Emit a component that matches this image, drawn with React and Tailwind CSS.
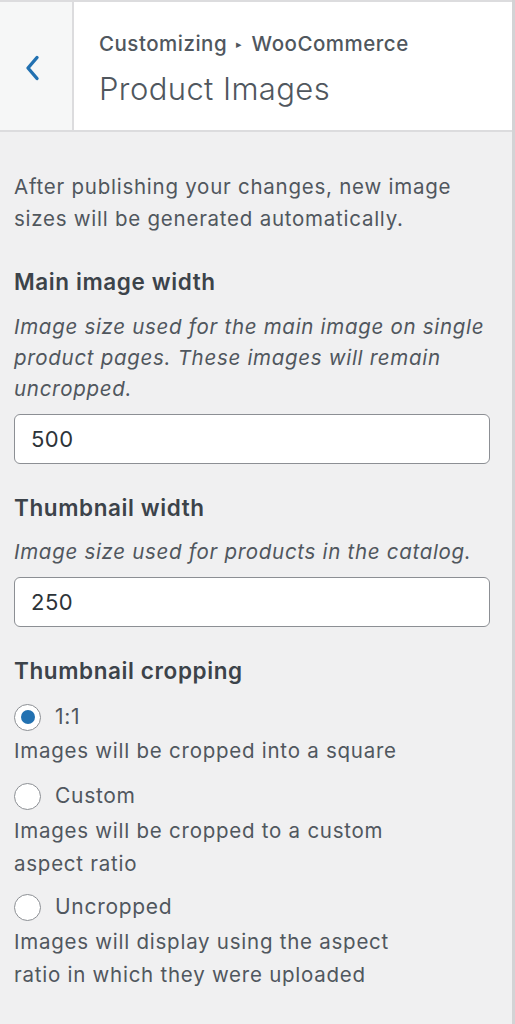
import React from "react";

function Radio({ checked, label }) {
  return (
    <div className="flex items-center h-[32px]">
      <span className="w-[27px] h-[27px] rounded-full border-[1.5px] border-[#8c8f94] bg-white flex items-center justify-center shrink-0">
        {checked && <span className="w-[14px] h-[14px] rounded-full bg-[#2271b1]" />}
      </span>
      <span className="ml-[14px] text-[21px] tracking-[0.7px] leading-[32px] text-[#50575e]">{label}</span>
    </div>
  );
}

export default function App() {
  const font = { fontFamily: "Inter, 'Noto Sans', sans-serif" };
  const body = "text-[20.5px] tracking-[0.75px] text-[#50575e]";
  const ital = "text-[20.5px] tracking-[0.7px] leading-[31px] italic text-[#50575e]";
  const head = "text-[22.5px] tracking-[0.6px] leading-[32px] font-semibold text-[#3c434a]";
  const input = "mt-[10px] h-[50px] rounded-[6px] border border-[#8c8f94] bg-white flex items-center pl-[16px] text-[22px] tracking-[0.5px] text-[#2c3338]";
  return (
    <div className="w-[515px] h-[1024px] flex bg-[#f0f0f1] overflow-hidden" style={font}>
      <div className="w-[512px] flex flex-col border-t-2 border-[#dcdcde]">
        <div className="flex h-[130px] bg-white border-b-2 border-[#dcdcde]">
          <div className="w-[74px] bg-[#f6f7f7] border-r-2 border-[#dcdcde] flex items-center justify-center">
            <svg width="18" height="26" viewBox="0 0 18 26" className="ml-[-6px] mt-[4px]">
              <path d="M13 2.5 L4 13 L13 23.5" fill="none" stroke="#2271b1" strokeWidth="3.4" strokeLinecap="round" strokeLinejoin="round" />
            </svg>
          </div>
          <div className="flex flex-col pl-[25px] pt-[26px]">
            <div className="text-[20.5px] tracking-[0.5px] leading-[32px] font-medium text-[#50575e] flex items-center">
              <span>Customizing</span>
              <span className="text-[11px] mx-[9px]">▸</span>
              <span>WooCommerce</span>
            </div>
            <div className="text-[31px] tracking-[0.4px] leading-[40px] font-light text-[#50575e] mt-[9px]">Product Images</div>
          </div>
        </div>

        <div className="flex flex-col pl-[14px] pr-[22px]">
          <p className={`mt-[39px] leading-[32px] ${body}`}>
            After publishing your changes, new image sizes will be generated automatically.
          </p>

          <h3 className={`mt-[31px] ${head}`}>Main image width</h3>
          <p className={`mt-[13px] ${ital}`}>
            Image size used for the main image on single product pages. These images will remain uncropped.
          </p>
          <div className={input}>500</div>

          <h3 className={`mt-[28px] ${head}`}>Thumbnail width</h3>
          <p className={`mt-[12px] ${ital}`}>
            Image size used for products in the catalog.
          </p>
          <div className={input}>250</div>

          <h3 className={`mt-[28px] ${head}`}>Thumbnail cropping</h3>

          <div className="mt-[14px]">
            <Radio checked label="1:1" />
          </div>
          <p className={`mt-[2px] leading-[32px] max-w-[415px] ${body}`}>Images will be cropped into a square</p>

          <div className="mt-[13px]">
            <Radio label="Custom" />
          </div>
          <p className={`mt-[2px] leading-[33px] max-w-[415px] ${body}`}>Images will be cropped to a custom aspect ratio</p>

          <div className="mt-[11px]">
            <Radio label="Uncropped" />
          </div>
          <p className={`mt-[2px] leading-[33px] max-w-[415px] ${body}`}>Images will display using the aspect ratio in which they were uploaded</p>
        </div>
      </div>
      <div className="w-[3px] bg-[#d3d3d5]" />
    </div>
  );
}
